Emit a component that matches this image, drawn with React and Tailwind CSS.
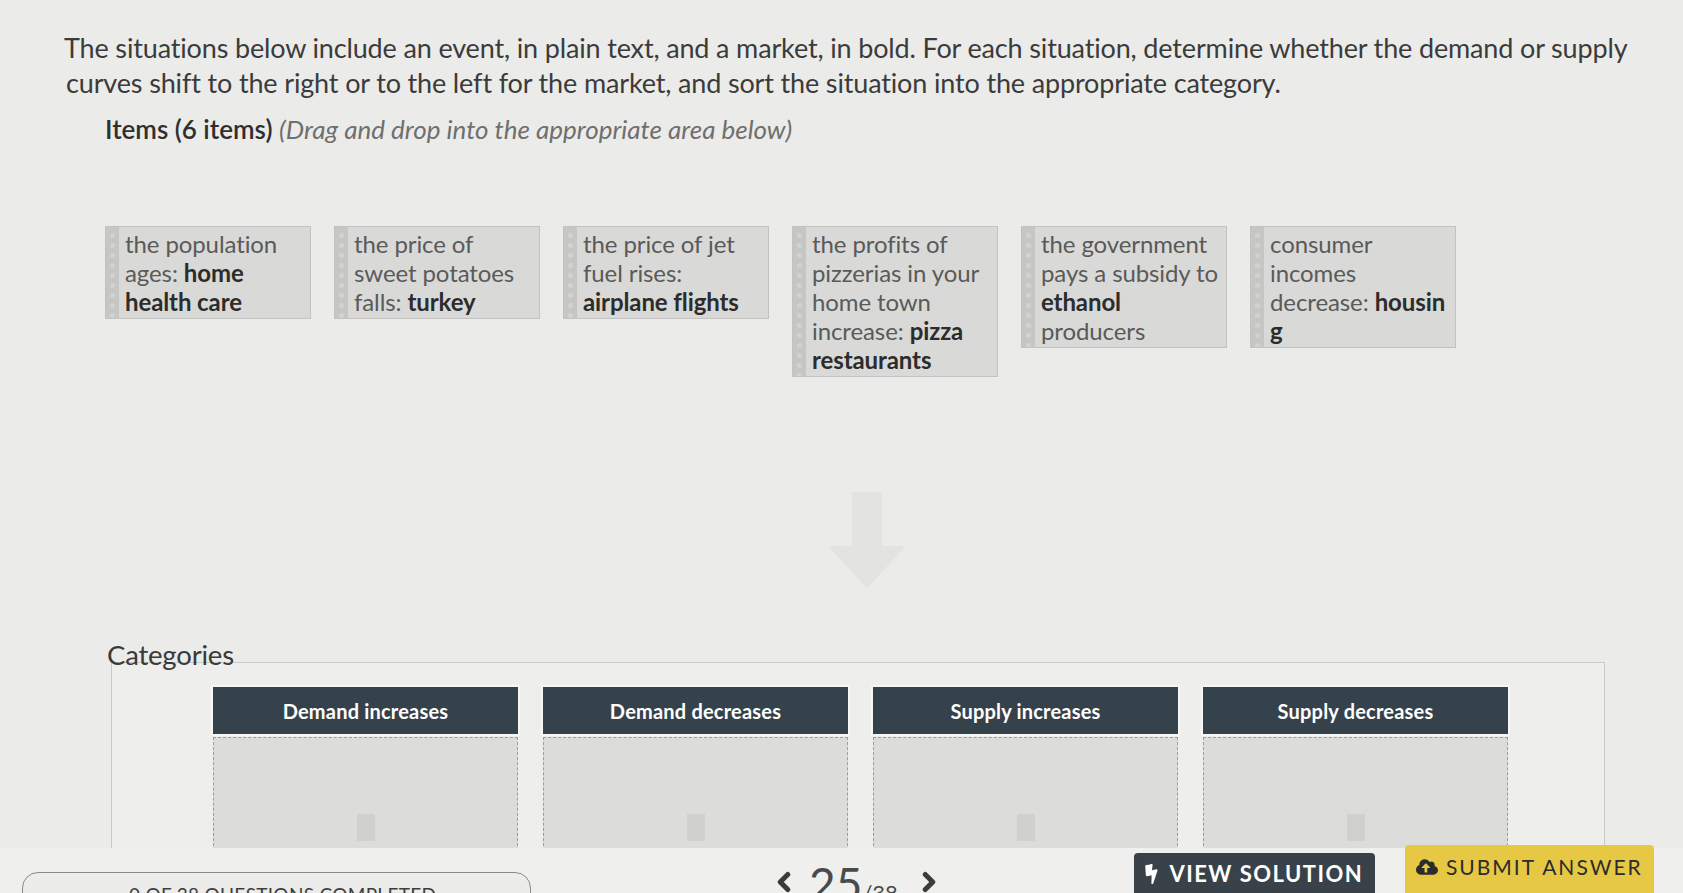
import React from "react";
import { FaCloudUploadAlt, FaBolt } from "react-icons/fa";
import { ChevronLeft, ChevronRight } from "lucide-react";

const font = { fontFamily: "Lato, 'Open Sans', sans-serif" };

const cards = [
  [["the population"], ["ages: ", "home"], [null, "health care"]],
  [["the price of"], ["sweet potatoes"], ["falls: ", "turkey"]],
  [["the price of jet"], ["fuel rises:"], [null, "airplane flights"]],
  [["the profits of"], ["pizzerias in your"], ["home town"], ["increase: ", "pizza"], [null, "restaurants"]],
  [["the government"], ["pays a subsidy to"], [null, "ethanol"], ["producers"]],
  [["consumer"], ["incomes"], ["decrease: ", "housin"], [null, "g"]],
];

const categories = ["Demand increases", "Demand decreases", "Supply increases", "Supply decreases"];

function Grip() {
  return (
    <div className="absolute left-0 top-0 bottom-0 w-[13px] bg-[#c6c6c4] overflow-hidden">
      <div className="flex flex-col items-center gap-[5px] pt-[6px]">
        {Array.from({ length: 16 }).map((_, i) => (
          <div key={i} className="w-[5px] h-[5px] rounded-full bg-[#d2d2d0]" />
        ))}
      </div>
    </div>
  );
}

function Card({ lines }) {
  return (
    <div className="relative w-[206px] shrink-0 bg-[#d9d9d7] border border-[#c2c2c0] pl-[19px] pr-[2px] py-[2px]">
      <Grip />
      <div className="text-[24px] leading-[29px] tracking-[-0.1px] text-[#5a5a5a]">
        {lines.map((l, i) => (
          <div key={i} className="whitespace-nowrap">
            {l[0] && <span>{l[0]}</span>}
            {l[1] && <span className="font-bold text-[#2c2c2c]">{l[1]}</span>}
          </div>
        ))}
      </div>
    </div>
  );
}

function Column({ title }) {
  return (
    <div className="w-[309px] shrink-0 flex flex-col">
      <div className="h-[51px] bg-[#36424b] border-2 border-[#f6f6f4] flex items-center justify-center text-white font-bold text-[20px] tracking-[0.2px]">
        {title}
      </div>
      <div className="h-[200px] mt-[1px] mx-[2px] border border-dashed border-[#9c9c9a] bg-[#dcdcda] flex justify-center">
        <div className="mt-[76px] w-[18px] h-[27px] bg-[#d0d0ce]" />
      </div>
    </div>
  );
}

export default function App() {
  return (
    <div className="w-[1683px] h-[893px] overflow-hidden bg-[#ebebe9] flex flex-col" style={font}>
      <div className="h-[848px] overflow-hidden shrink-0">
        <div className="pl-[64px] pt-[30px] text-[27px] leading-[35px] tracking-[-0.15px] text-[#3b3b3b]">
          <div className="whitespace-nowrap">
            The situations below include an event, in plain text, and a market, in bold. For each situation, determine whether the demand or supply
          </div>
          <div className="whitespace-nowrap pl-[2px]">
            curves shift to the right or to the left for the market, and sort the situation into the appropriate category.
          </div>
        </div>
        <div className="pl-[105px] pt-[14px] text-[26px] leading-[30px] whitespace-nowrap">
          <span className="text-[#2f2f2f] font-semibold">Items (6 items)</span>{" "}
          <span className="italic text-[#6f6f6f]">(Drag and drop into the appropriate area below)</span>
        </div>

        <div className="flex items-start gap-[23px] pl-[105px] mt-[82px]">
          {cards.map((c, i) => (
            <Card key={i} lines={c} />
          ))}
        </div>

        <div className="pl-[826px] mt-[115px]">
          <svg width="82" height="96" viewBox="0 0 82 96">
            <path d="M26 0 H56 V54 H80 L41 96 L2 54 H26 Z" fill="#e3e3e1" />
          </svg>
        </div>

        <div className="pl-[107px] mt-[52px] text-[27.5px] leading-[30px] text-[#3a3a3a] tracking-[-0.2px]">Categories</div>

        <div className="ml-[111px] -mt-[8px] w-[1494px] h-[400px] border border-[#cacac8] bg-[#eeeeec] pt-[22px] pl-[99px]">
          <div className="flex gap-[21px]">
            {categories.map((c) => (
              <Column key={c} title={c} />
            ))}
          </div>
        </div>
      </div>

      <div className="flex-1 bg-[#efefed] flex items-start relative">
        <div className="ml-[22px] mt-[24px] w-[509px] h-[40px] rounded-t-[16px] border border-[#8a8a88] bg-[#ececea] pl-[106px] pt-[10px] overflow-hidden">
          <div className="text-[19px] leading-[24px] tracking-[0.3px] text-[#3e3e3e] whitespace-nowrap">0 OF 38 QUESTIONS COMPLETED</div>
        </div>
        <div className="ml-[238px] mt-[13px] flex items-start gap-[10px] text-[#4a4a4a]">
          <ChevronLeft size={30} strokeWidth={4} className="mt-[6px] shrink-0 text-[#3b3b3b]" />
          <div className="whitespace-nowrap leading-none">
            <span className="text-[46px]">25</span>
            <span className="text-[22px]">/38</span>
          </div>
          <ChevronRight size={30} strokeWidth={4} className="ml-[6px] mt-[6px] shrink-0 text-[#3b3b3b]" />
        </div>
        <div className="ml-[190px] mt-[5px] w-[241px] h-[50px] bg-[#3a4249] rounded-t-[4px] flex items-start justify-center pt-[8px] gap-[10px] text-white">
          <FaBolt className="w-[14px] h-[20px] mt-[3px] -rotate-12" />
          <span className="text-[22px] leading-[26px] tracking-[1.5px] font-bold">VIEW SOLUTION</span>
        </div>
        <div className="ml-[30px] -mt-[3px] w-[249px] h-[60px] bg-[#e7c845] rounded-t-[4px] flex items-start justify-center pt-[9px] gap-[8px] text-[#2c2c2c]">
          <FaCloudUploadAlt className="w-[22px] h-[22px] mt-[2px]" />
          <span className="text-[21px] leading-[26px] tracking-[2px]">SUBMIT ANSWER</span>
        </div>
      </div>
    </div>
  );
}
